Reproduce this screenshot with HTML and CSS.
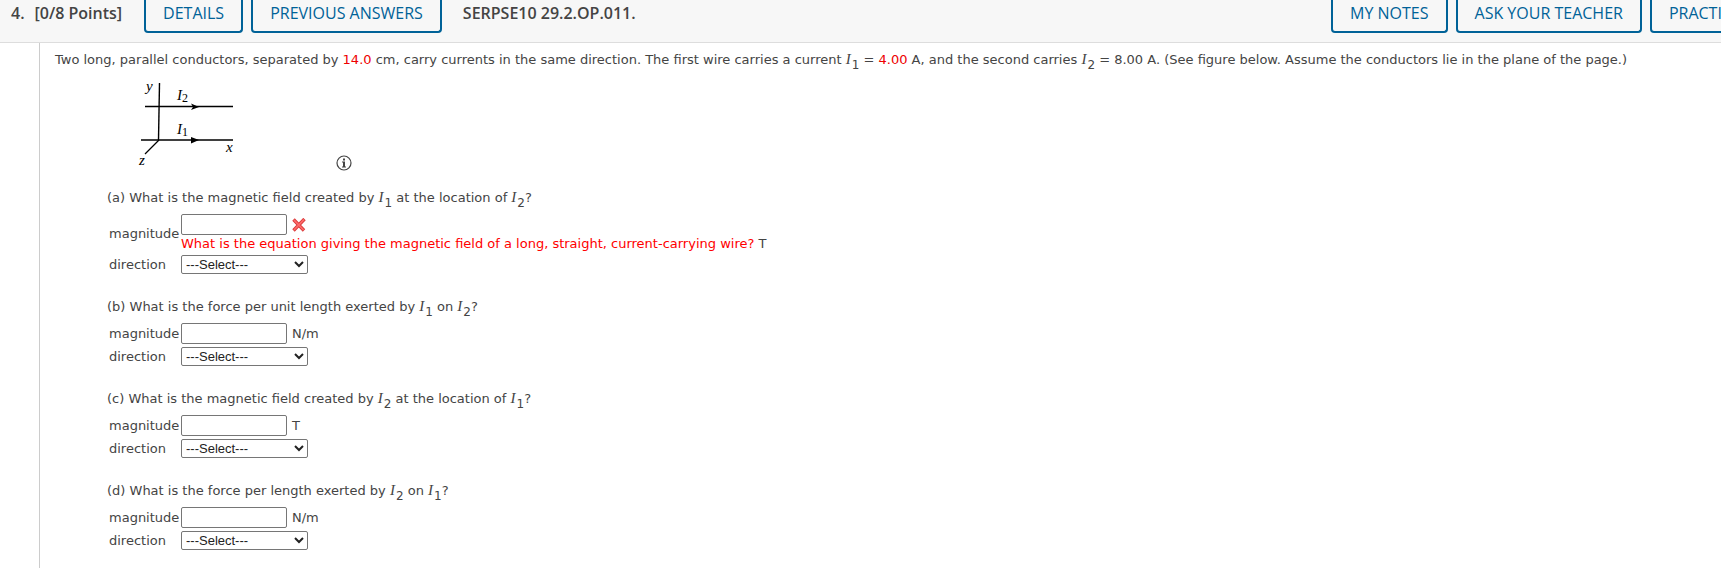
FILE: index.html
```html
<!DOCTYPE html>
<html lang="en">
<head>
  <meta charset="UTF-8">
  <meta name="viewport" content="width=device-width, initial-scale=1">
  <title>SERPSE10 29.2.OP.011.</title>
  <link rel="stylesheet" href="styles.css">
</head>
<body>
  <header class="question-header">
    <span class="number">4.</span>
    <span class="points">[0/8 Points]</span>
    <button class="btn" type="button">DETAILS</button>
    <button class="btn" type="button">PREVIOUS ANSWERS</button>
    <span class="question-name">SERPSE10 29.2.OP.011.</span>
    <div class="header-actions">
      <button class="btn" type="button">MY NOTES</button>
      <button class="btn" type="button">ASK YOUR TEACHER</button>
      <button class="btn" type="button">PRACTICE ANOTHER</button>
    </div>
  </header>

  <main class="question">
    <p class="intro">Two long, parallel conductors, separated by <span class="value">14.0</span> cm, carry currents in the same direction. The first wire carries a current <i>I</i><sub>1</sub> = <span class="value">4.00</span> A, and the second carries <i>I</i><sub>2</sub> = 8.00 A. (See figure below. Assume the conductors lie in the plane of the page.)</p>

    <div class="figure">
      <svg class="diagram" width="100" height="90" viewBox="0 0 100 90" role="img" aria-label="Two parallel wires along x">
        <g stroke="#000" fill="none">
          <path d="M21.5 4L20.5 61" stroke-width="1.4"/>
          <path d="M7 27.500H95M3 61H95" stroke-width="1.3"/>
          <path d="M21 61L7 75" stroke-width="1.2"/>
        </g>
        <path d="M53 24.500L61 28L53 31L55 28ZM53 58L61 61L53 64.500Z"/>
        <g class="diagram-text">
          <text x="8" y="12">y</text>
          <text x="39" y="21">I<tspan class="diagram-sub" dy="2">2</tspan></text>
          <text x="39" y="55">I<tspan class="diagram-sub" dy="2">1</tspan></text>
          <text x="88" y="73">x</text>
          <text x="1" y="86">z</text>
        </g>
      </svg>
      <svg class="info" width="16" height="16" viewBox="0 0 16 16" role="img" aria-label="Information">
        <circle cx="8" cy="8" r="7" fill="none" stroke="#444" stroke-width="1.2"/>
        <path d="M7 3.500h2v2H7zM6 6.500h3v5h1v1H6v-1h1v-4H6z" fill="#444"/>
      </svg>
    </div>

    <section class="part">
      <p>(a) What is the magnetic field created by <i>I</i><sub>1</sub> at the location of <i>I</i><sub>2</sub>?</p>
      <div class="answers">
        <label for="a-mag">magnitude</label>
        <div>
          <div class="field">
            <input type="text" id="a-mag">
            <svg class="wrong" width="14" height="14" viewBox="0 0 14 14" role="img" aria-label="Incorrect">
              <path d="M1.500 1.500L12 12.500M12.500 1L1.500 12.500" stroke="#d93a3a" stroke-width="3.4"/>
              <path d="M2 2L11.500 12M12 1.500L2 12" stroke="#ff6b6b" stroke-width="1.8"/>
            </svg>
          </div>
          <div class="feedback"><span>What is the equation giving the magnetic field of a long, straight, current-carrying wire?</span> T</div>
        </div>
        <label for="a-dir">direction</label>
        <select id="a-dir"><option>---Select---</option></select>
      </div>
    </section>

    <section class="part">
      <p>(b) What is the force per unit length exerted by <i>I</i><sub>1</sub> on <i>I</i><sub>2</sub>?</p>
      <div class="answers">
        <label for="b-mag">magnitude</label>
        <div class="field"><input type="text" id="b-mag"> N/m</div>
        <label for="b-dir">direction</label>
        <select id="b-dir"><option>---Select---</option></select>
      </div>
    </section>

    <section class="part">
      <p>(c) What is the magnetic field created by <i>I</i><sub>2</sub> at the location of <i>I</i><sub>1</sub>?</p>
      <div class="answers">
        <label for="c-mag">magnitude</label>
        <div class="field"><input type="text" id="c-mag"> T</div>
        <label for="c-dir">direction</label>
        <select id="c-dir"><option>---Select---</option></select>
      </div>
    </section>

    <section class="part">
      <p>(d) What is the force per length exerted by <i>I</i><sub>2</sub> on <i>I</i><sub>1</sub>?</p>
      <div class="answers">
        <label for="d-mag">magnitude</label>
        <div class="field"><input type="text" id="d-mag"> N/m</div>
        <label for="d-dir">direction</label>
        <select id="d-dir"><option>---Select---</option></select>
      </div>
    </section>
  </main>
</body>
</html>
```
FILE: styles.css
```css
* {
  box-sizing: border-box;
}

body {
  margin: 0;
  min-height: 100vh;
  display: flex;
  flex-direction: column;
  overflow: hidden;
  background: #fff;
  color: #444;
  font-family: Verdana, "DejaVu Sans", sans-serif;
  font-size: 13px;
}

/* header bar */
.question-header {
  display: flex;
  align-items: flex-start;
  height: 43px;
  padding-left: 11px;
  background: #f7f7f7;
  border-bottom: 1px solid #ddd;
  font-family: "Open Sans", sans-serif;
  font-size: 16px;
  line-height: 26px;
  white-space: nowrap;
}

.number,
.points,
.question-name {
  font-weight: 600;
}

.number {
  margin-right: 10px;
}

.points {
  margin-right: 22px;
}

.question-name {
  margin-left: 13px;
}

.btn {
  flex: none;
  height: 33px;
  margin-right: 8px;
  padding: 0 17px 5px;
  border: 2px solid #006298;
  border-top: 0;
  border-radius: 0 0 4px 4px;
  background: #f7f7f7;
  color: #006298;
  font: inherit;
  cursor: pointer;
}

.header-actions {
  display: flex;
  margin-left: auto;
  margin-right: -125px;
}

/* question body */
.question {
  flex: 1;
  margin-left: 39px;
  padding: 7px 15px 0;
  border-left: 1px solid #ccc;
}

p {
  margin: 0;
  line-height: 20px;
}

i {
  font-family: "Liberation Serif", serif;
  font-size: 15px;
  line-height: 0;
}

sub {
  margin-left: 1px;
  font-size: 12px;
  line-height: 0;
  vertical-align: -5px;
}

.intro {
  white-space: nowrap;
}

.value {
  color: #e00;
}

.figure {
  display: flex;
  align-items: flex-end;
  gap: 98px;
  height: 92px;
  margin: 9px 0 17px 83px;
}

.diagram {
  align-self: flex-start;
}

.diagram-text {
  font: italic 15px "Liberation Serif", serif;
}

.diagram-sub {
  font-style: normal;
  font-size: 12px;
}

.part {
  margin: 0 0 23px 52px;
}

.answers {
  display: grid;
  grid-template-columns: 72px 1fr;
  align-items: center;
  gap: 3px 0;
  margin: 6px 0 0 2px;
}

.field {
  display: flex;
  align-items: center;
  gap: 5px;
  height: 21px;
}

.answers input {
  width: 106px;
  height: 21px;
  border: 1px solid #767676;
  border-radius: 2px;
}

.answers select {
  width: 127px;
  height: 19px;
  padding: 0;
  border: 1px solid #767676;
  border-radius: 2px;
  background: #fff;
  color: #222;
  font-family: Arial, "Liberation Sans", sans-serif;
  font-size: 13px;
}

.feedback {
  line-height: 17px;
}

.feedback span {
  color: #f00;
}
```
